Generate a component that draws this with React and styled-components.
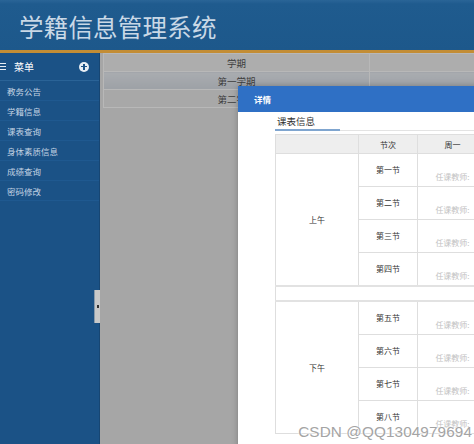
import React from "react";
import styled, { createGlobalStyle } from "styled-components";

const Global = createGlobalStyle`
  html, body { margin: 0; padding: 0; }
  body {
    width: 474px; height: 444px; overflow: hidden;
    font-family: "Noto Sans CJK SC", "Noto Sans", sans-serif;
  }
  #root { width: 474px; height: 444px; }
`;

const Page = styled.div`
  width: 474px; height: 444px; display: flex; flex-direction: column;
  overflow: hidden; position: relative; background: #a6a6a6;
`;

const Header = styled.header`
  height: 53px; flex: none; display: flex; align-items: center;
  padding-left: 19px; box-sizing: border-box;
  background: linear-gradient(#2a6597 0, #1f5b8e 4px, #1d588b 100%);
  border-bottom: 3px solid #c38d35;
`;

const Title = styled.h1`
  margin: 0; font-size: 24.5px; font-weight: 400; color: #c9d8e6;
  letter-spacing: 0.2px; line-height: 1; padding-top: 4px;
`;

const Body = styled.div`
  flex: 1; display: flex; min-height: 0;
`;

const Sidebar = styled.nav`
  width: 100px; flex: none; background: #1b5286; position: relative;
  border-right: 1px solid #174673; box-sizing: border-box;
`;

const MenuHead = styled.div`
  height: 27px; display: flex; align-items: center; padding: 0 10px 0 0;
  border-bottom: 1px solid #2a6397; color: #fff; font-size: 10px;
`;

const Burger = styled.span`
  width: 6px; display: flex; flex-direction: column; gap: 2px; margin-right: 8px;
  & > i { display: block; height: 1.3px; background: #e6eef6; }
`;

const PlusCircle = styled.span`
  margin-left: auto; width: 10px; height: 10px; border-radius: 50%;
  background: #e8eef4; position: relative;
  &::before, &::after { content: ""; position: absolute; background: #1b5286; }
  &::before { left: 2px; right: 2px; top: 4.3px; height: 1.4px; }
  &::after { top: 2px; bottom: 2px; left: 4.3px; width: 1.4px; }
`;

const MenuItem = styled.div`
  height: 20px; display: flex; align-items: center; padding-left: 7px;
  font-size: 8.5px; color: #c3d3e3; border-bottom: 1px solid #1f5990;
  box-sizing: border-box;
`;

const Handle = styled.div`
  position: absolute; right: -1px; top: 237px; width: 5px; height: 33px;
  background: #c9c9c9; border-left: 1px solid #8a9bab;
  display: flex; align-items: center; justify-content: center;
  &::after { content: ""; width: 2px; height: 3px; background: #333; }
`;

const Main = styled.main`
  flex: 1; position: relative; padding: 0 0 0 3px; min-width: 0;
`;

const TermTable = styled.table`
  border-collapse: collapse; width: 420px; table-layout: fixed;
  font-size: 9.5px; color: #3e3e3e;
`;

const TermCell = styled.td`
  height: 17px; padding: 0; text-align: center; border: 1px solid #b8b8b8;
  background: ${(p) => (p.$head ? "#adadad" : p.$alt ? "linear-gradient(#a9acb0, #9da1a6)" : "#a8a8a8")};
`;

const Modal = styled.section`
  position: absolute; left: 138px; top: 33px; width: 360px; height: 400px;
  background: #fff; box-shadow: 0 0 6px rgba(0,0,0,0.25);
`;

const ModalHead = styled.div`
  height: 26px; background: #2f70c5; display: flex; align-items: center;
  padding-left: 16px; color: #fff; font-size: 8.5px; font-weight: 700;
`;

const ModalBody = styled.div`
  padding: 3px 0 0 37px;
`;

const Tabs = styled.div`
  display: flex; border-bottom: 1px solid #e3e3e3; margin-bottom: 3px;
`;

const Tab = styled.div`
  width: 65px; padding: 0 0 1px 2px; box-sizing: border-box;
  font-size: 9.5px; color: #333; border-bottom: 2px solid #7fa5cf;
  margin-bottom: -1px; line-height: 13px;
`;

const Grid = styled.table`
  border-collapse: collapse; table-layout: fixed; width: 212px;
  font-size: 8px; color: #333;
`;

const Th = styled.th`
  height: 18px; padding: 0; background: #eeeeee; font-weight: 400;
  border: 1px solid #dedede; text-align: center; font-size: 8px;
`;

const Td = styled.td`
  height: 32px; padding: 0; border: 1px solid #dedede; text-align: center;
  vertical-align: middle; line-height: 10px;
`;

const Slot = styled.td`
  height: 28px; padding: 0 0 4px; border: 1px solid #dedede; text-align: center;
  vertical-align: bottom; color: #c2c2c2; font-size: 8px; white-space: nowrap;
  line-height: 10px;
`;

const Gap = styled.td`
  height: 13px; padding: 0; border: 1px solid #dedede;
  border-top: 2px solid #e2e2e2; border-bottom: 2px solid #e2e2e2;
`;

const Watermark = styled.div`
  position: absolute; right: 2px; bottom: 3px;
  font-family: "Liberation Sans", Arial, sans-serif; font-size: 15.3px;
  color: #a4a4a4; letter-spacing: 0.1px;
  text-shadow: 0 0 2px #fff, 0 0 2px #fff;
`;

const menu = ["教务公告", "学籍信息", "课表查询", "身体素质信息", "成绩查询", "密码修改"];
const morning = ["第一节", "第二节", "第三节", "第四节"];
const afternoon = ["第五节", "第六节", "第七节", "第八节"];

function Half({ label, items }) {
  return items.map((it, i) => (
    <tr key={it}>
      {i === 0 && <Td rowSpan={4}>{label}</Td>}
      <Td>{it}</Td>
      <Slot>任课教师:</Slot>
    </tr>
  ));
}

export default function App() {
  return (
    <Page>
      <Global />
      <Header>
        <Title>学籍信息管理系统</Title>
      </Header>
      <Body>
        <Sidebar>
          <MenuHead>
            <Burger><i /><i /><i /></Burger>
            菜单
            <PlusCircle />
          </MenuHead>
          {menu.map((m) => (
            <MenuItem key={m}>{m}</MenuItem>
          ))}
          <Handle />
        </Sidebar>
        <Main>
          <TermTable>
            <colgroup>
              <col style={{ width: 266 }} />
              <col />
            </colgroup>
            <tbody>
              <tr><TermCell $head>学期</TermCell><TermCell $head /></tr>
              <tr><TermCell $alt>第一学期</TermCell><TermCell $alt /></tr>
              <tr><TermCell>第二学期</TermCell><TermCell /></tr>
            </tbody>
          </TermTable>
          <Modal>
            <ModalHead>详情</ModalHead>
            <ModalBody>
              <Tabs><Tab>课表信息</Tab></Tabs>
              <Grid>
                <colgroup>
                  <col style={{ width: 83 }} />
                  <col style={{ width: 59 }} />
                  <col style={{ width: 70 }} />
                </colgroup>
                <thead>
                  <tr><Th /><Th>节次</Th><Th>周一</Th></tr>
                </thead>
                <tbody>
                  <Half label="上午" items={morning} />
                  <tr><Gap colSpan={3} /></tr>
                  <Half label="下午" items={afternoon} />
                </tbody>
              </Grid>
            </ModalBody>
          </Modal>
        </Main>
      </Body>
      <Watermark>CSDN @QQ1304979694</Watermark>
    </Page>
  );
}
